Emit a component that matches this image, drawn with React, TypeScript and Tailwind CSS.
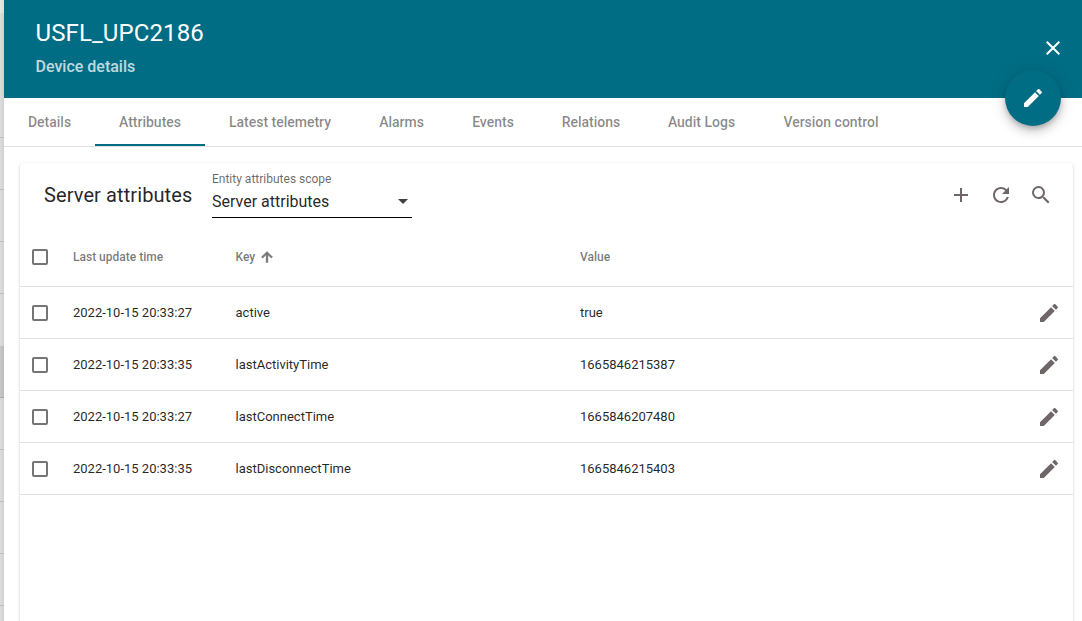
const PENCIL = "M3 17.25V21h3.75L17.81 9.94l-3.75-3.75L3 17.25zM20.71 7.04c.39-.39.39-1.02 0-1.41l-2.34-2.34c-.39-.39-1.02-.39-1.41 0l-1.83 1.83 3.75 3.75 1.83-1.83z";

function Icon({ d, className }: { d: string; className: string }) {
  return (
    <svg viewBox="0 0 24 24" className={className} fill="currentColor">
      <path d={d} />
    </svg>
  );
}

function Box() {
  return <div className="w-4 h-4 border-2 border-[#757575] rounded-[2px] box-border" />;
}

const tabs: [string, string][] = [
  ["Details", "w-[91px]"],
  ["Attributes", "w-[110px]"],
  ["Latest telemetry", "w-[150px]"],
  ["Alarms", "w-[93px]"],
  ["Events", "w-[90px]"],
  ["Relations", "w-[106px]"],
  ["Audit Logs", "w-[115px]"],
  ["Version control", "w-[144px]"],
];

const rows = [
  ["2022-10-15 20:33:27", "active", "true"],
  ["2022-10-15 20:33:35", "lastActivityTime", "1665846215387"],
  ["2022-10-15 20:33:27", "lastConnectTime", "1665846207480"],
  ["2022-10-15 20:33:35", "lastDisconnectTime", "1665846215403"],
];

const backdrop: [string, string][] = [
  ["h-[13px]", "from-[#e6e6e6] to-[#dcdcdc]"],
  ["h-[125px]", "from-[#dcdcdc] to-[#d0d0d0] border-b border-[#bdbdbd]"],
  ["h-[52px]", "from-[#dcdcdc] to-[#d0d0d0] border-b border-[#bdbdbd]"],
  ["h-[52px]", "from-[#dcdcdc] to-[#d0d0d0] border-b border-[#bdbdbd]"],
  ["h-[52px]", "from-[#dcdcdc] to-[#d0d0d0] border-b border-[#bdbdbd]"],
  ["h-[52px]", "from-[#dcdcdc] to-[#d0d0d0]"],
  ["h-[52px]", "from-[#c8c8c8] to-[#bcbcbc] border-b border-[#a8a8a8]"],
  ["h-[52px]", "from-[#dcdcdc] to-[#d0d0d0] border-b border-[#bdbdbd]"],
  ["h-[52px]", "from-[#dcdcdc] to-[#d0d0d0] border-b border-[#bdbdbd]"],
  ["h-[52px]", "from-[#dcdcdc] to-[#d0d0d0] border-b border-[#bdbdbd]"],
  ["h-[52px]", "from-[#dcdcdc] to-[#d0d0d0] border-b border-[#bdbdbd]"],
  ["h-[15px]", "from-[#dcdcdc] to-[#d0d0d0]"],
];

export default function App() {
  return (
    <div className="w-[1082px] h-[621px] overflow-hidden flex bg-white font-['Roboto',sans-serif]">
      <div className="w-1 shrink-0 flex flex-col">
        {backdrop.map(([h, c], i) => (
          <div key={i} className={`${h} ${c} box-border shrink-0 bg-gradient-to-r`} />
        ))}
      </div>
      <div className="flex-1 relative flex flex-col min-w-0">
        <header className="h-[98px] shrink-0 bg-[#006d85] text-white pl-[31.5px] pt-[17px]">
          <div className="text-[24px] leading-[32px] tracking-[0.1px]">USFL_UPC2186</div>
          <div className="text-[16px] leading-[24px] mt-[6px] font-medium text-white/75">Device details</div>
        </header>
        <button className="absolute left-[1037px] top-[36px] w-6 h-6 text-white">
          <Icon className="w-6 h-6" d="M19 6.41 17.59 5 12 10.59 6.41 5 5 6.41 10.59 12 5 17.59 6.41 19 12 13.41 17.59 19 19 17.59 13.41 12z" />
        </button>
        <button className="absolute left-[1001px] top-[70px] w-14 h-14 rounded-full bg-[#006d85] text-white flex items-center justify-center shadow-[0_3px_5px_-1px_rgba(0,0,0,0.2),0_6px_10px_0_rgba(0,0,0,0.14),0_1px_18px_0_rgba(0,0,0,0.12)]">
          <Icon className="w-6 h-6" d={PENCIL} />
        </button>
        <nav className="h-[49px] shrink-0 flex border-b border-[#e0e0e0]">
          {tabs.map(([t, w], i) => (
            <div key={t} className={`${w} relative flex items-center justify-center text-[14px] font-medium text-black/[0.47]`}>
              {t}
              {i === 1 && <div className="absolute left-0 right-0 bottom-0 h-0.5 bg-[#006d85]" />}
            </div>
          ))}
        </nav>
        <main className="flex-1 bg-white pl-4 pt-4 min-h-0">
          <section className="h-[470px] w-[1053px] bg-white rounded-[4px] shadow-[0_1px_3px_0_rgba(0,0,0,0.2),0_1px_1px_0_rgba(0,0,0,0.1)]">
            <div className="h-[62px] flex items-center pl-6 pr-5">
              <h2 className="w-[168px] text-[20px] leading-[32px] tracking-[0.1px] text-black/87 shrink-0 relative top-[1px]">Server attributes</h2>
              <div className="w-[200px] relative top-[1px]">
                <div className="text-[12px] leading-[14px] text-black/60">Entity attributes scope</div>
                <div className="h-[33px] -mt-px box-border flex items-center justify-between border-b border-black text-[16px] text-black/87 pr-[2px]">
                  <span className="relative top-[1px]">Server attributes</span>
                  <span className="w-0 h-0 mr-[2px] border-x-[5px] border-x-transparent border-t-[5px] border-t-[#000000c0]" />
                </div>
              </div>
              <div className="ml-auto flex items-center gap-4 text-[#6f6667] relative top-[1px]">
                <Icon className="w-6 h-6" d="M19 13h-6v6h-2v-6H5v-2h6V5h2v6h6v2z" />
                <Icon className="w-6 h-6" d="M17.65 6.35A7.958 7.958 0 0 0 12 4c-4.42 0-7.99 3.58-7.99 8s3.57 8 7.99 8c3.73 0 6.84-2.55 7.73-6h-2.08A5.99 5.99 0 0 1 12 18c-3.31 0-6-2.69-6-6s2.69-6 6-6c1.66 0 3.14.69 4.22 1.78L13 11h7V4l-2.35 2.35z" />
                <Icon className="w-6 h-6" d="M15.5 14h-.79l-.28-.27A6.471 6.471 0 0 0 16 9.5 6.5 6.5 0 1 0 9.5 16c1.61 0 3.09-.59 4.23-1.57l.27.28v.79l5 4.99L20.49 19l-4.99-5zm-6 0C7.01 14 5 11.99 5 9.5S7.01 5 9.5 5 14 7.01 14 9.5 11.99 14 9.5 14z" />
              </div>
            </div>
            <div className="h-[62px] pt-[2px] flex items-center border-b border-[#e0e0e0] text-[12px] font-medium text-black/54">
              <div className="w-[53px] pl-3 shrink-0"><Box /></div>
              <div className="w-[162.5px] shrink-0">Last update time</div>
              <div className="w-[344.5px] shrink-0 flex items-center gap-1">
                Key
                <svg viewBox="0 0 24 24" className="w-4 h-4 text-[#757575]" fill="currentColor" stroke="currentColor" strokeWidth="1.5">
                  <path d="M4 12l1.41 1.41L11 7.83V20h2V7.83l5.58 5.59L20 12l-8-8-8 8z" />
                </svg>
              </div>
              <div>Value</div>
            </div>
            {rows.map((r) => (
              <div key={r[1]} className="h-[52px] flex items-center border-b border-[#e0e0e0] text-[13px] text-black/87">
                <div className="w-[53px] pl-3 shrink-0"><Box /></div>
                <div className="w-[162.5px] shrink-0">{r[0]}</div>
                <div className="w-[344.5px] shrink-0">{r[1]}</div>
                <div>{r[2]}</div>
                <Icon className="w-6 h-6 ml-auto mr-3 text-[#6f6667]" d={PENCIL} />
              </div>
            ))}
          </section>
        </main>
      </div>
    </div>
  );
}
